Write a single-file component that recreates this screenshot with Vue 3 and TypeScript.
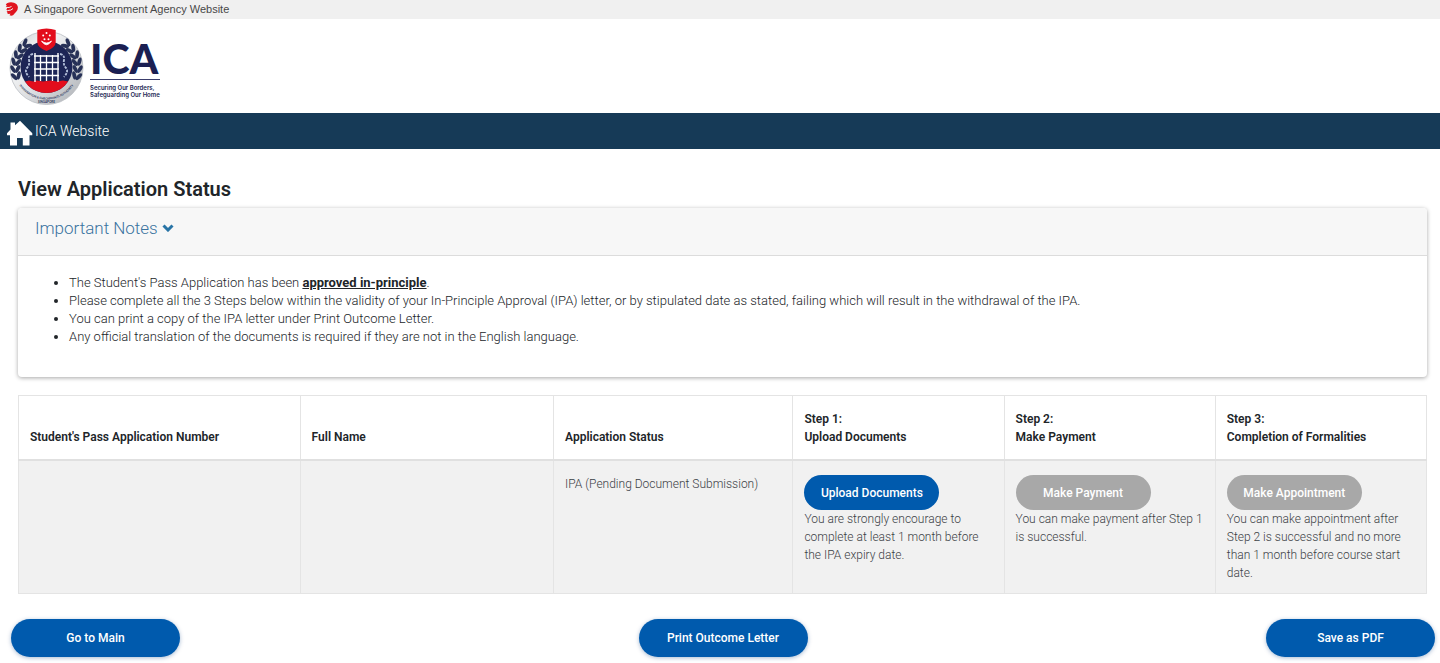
<script setup lang="ts">
interface Step {
  step: string
  title: string
  action: string
  enabled: boolean
  note: string
}

const navLabel = 'ICA Website'

const steps: Step[] = [
  {
    step: 'Step 1:',
    title: 'Upload Documents',
    action: 'Upload Documents',
    enabled: true,
    note: 'You are strongly encourage to complete at least 1 month before the IPA expiry date.',
  },
  {
    step: 'Step 2:',
    title: 'Make Payment',
    action: 'Make Payment',
    enabled: false,
    note: 'You can make payment after Step 1 is successful.',
  },
  {
    step: 'Step 3:',
    title: 'Completion of Formalities',
    action: 'Make Appointment',
    enabled: false,
    note: 'You can make appointment after Step 2 is successful and no more than 1 month before course start date.',
  },
]

const footerActions: string[] = ['Go to Main', 'Print Outcome Letter', 'Save as PDF']

// Leaves of the wreath: angle along the ring, in degrees from the top.
const leaves: number[] = [40, 53, 66, 79, 92, 105]
</script>

<template>
  <div class="page">
    <div class="gov-bar">
      <svg class="lion" viewBox="0 0 14 14" aria-hidden="true">
        <path d="M2 1.200Q5.500 -.3 9 .8q3.300 1 3.800 4Q13.200 8 11 10q-1.500 1.200-2 2.200-.7 1.400-2.700 1.600L4.500 13.200l1-1.500-2.800.4L2.400 10.600 1.600 9.800l1.200-1L1.300 7.500l.9-1.200L.8 5 1.800 3.800 .8 2.500z" fill="#e0141e" />
        <path d="M1 5.400Q4.500 6 6.500 4.500M2.500 8.600Q6.500 8.500 8 6.500" fill="none" stroke="#f0f0f0" stroke-width="1" />
      </svg>
      <span>A Singapore Government Agency Website</span>
    </div>

    <header class="brand">
      <svg class="crest" viewBox="0 0 76 78" role="img" aria-label="ICA crest">
        <defs>
          <linearGradient id="silver" x1="0" y1="0" x2="1" y2="1">
            <stop offset="0" stop-color="#c4c7cc" />
            <stop offset=".3" stop-color="#f4f5f6" />
            <stop offset=".6" stop-color="#d9dbde" />
            <stop offset="1" stop-color="#a9acb1" />
          </linearGradient>
          <clipPath id="disc"><circle cx="37.500" cy="39" r="26" /></clipPath>
          <path id="arc" d="M6 48 A32.800 32.800 0 0 0 69 48" />
        </defs>
        <circle cx="37.500" cy="40" r="36.500" fill="url(#silver)" stroke="#b9bcc1" stroke-width=".8" />
        <circle cx="37.500" cy="39" r="26" fill="#1d2556" />
        <g clip-path="url(#disc)">
          <path d="M8 54q8 0 12-1.500l4 1 4-1 6 1 8-1 6 1 6-1 5 1 10 1v20H8z" fill="#e30d1c" />
        </g>
        <g fill="#273157">
          <g v-for="a in leaves" :key="a">
            <g :transform="`rotate(${a} 37.500 40)`">
              <ellipse cx="37.500" cy="6.500" rx="4.200" ry="1.900" transform="rotate(28 37.500 6.500)" />
              <ellipse cx="37.500" cy="11.200" rx="4.200" ry="1.900" transform="rotate(-28 37.500 11.200)" />
            </g>
            <g :transform="`rotate(${-a} 37.500 40)`">
              <ellipse cx="37.500" cy="6.500" rx="4.200" ry="1.900" transform="rotate(-28 37.500 6.500)" />
              <ellipse cx="37.500" cy="11.200" rx="4.200" ry="1.900" transform="rotate(28 37.500 11.200)" />
            </g>
          </g>
        </g>
        <g stroke="#fff" fill="none">
          <path d="M26 25v29M49 25v29" stroke-width="1.400" />
          <path d="M31.500 27v26M37.500 27v26M43.500 27v26" stroke-width="1.300" />
          <path d="M25 28h25M25 34.500h25M25 41h25M25 47.500h25" stroke-width="1.300" />
          <path d="M24 26q-5 1-4 6t-2 8 2 9M51 26q5 1 4 6t2 8-2 9" stroke="#b4c0da" stroke-width="1.800" stroke-dasharray="2.500 1.200" />
        </g>
        <path d="M28.300 2q9.200-3 18.400 0v12q0 5.500-9.200 9-9.200-3.500-9.200-9z" fill="#e30d1c" />
        <path d="M32.500 13q5 7.500 10 0-5 4-10 0" fill="#fff" stroke="#fff" stroke-width=".8" />
        <g fill="#fff">
          <circle cx="37.500" cy="5" r="1" /><circle cx="34.200" cy="7.600" r="1" /><circle cx="40.800" cy="7.600" r="1" />
          <circle cx="35.500" cy="11.200" r="1" /><circle cx="39.500" cy="11.200" r="1" />
        </g>
        <text class="crest-text"><textPath href="#arc" startOffset="50%" text-anchor="middle">IMMIGRATION &amp; CHECKPOINTS AUTHORITY</textPath></text>
        <text class="crest-text" x="37.500" y="74.800" text-anchor="middle">SINGAPORE</text>
      </svg>
      <div class="wordmark">
        <div class="name">ICA</div>
        <div class="tagline">Securing Our Borders,<br />Safeguarding Our Home</div>
      </div>
    </header>

    <nav class="nav">
      <a href="#" class="home">
        <svg viewBox="0 0 26 26" aria-hidden="true">
          <path d="M13 .8 25.300 13.200v2H22.500v10.300H15.800V18H10v7.500H3V15.200H0v-2L3.500 9.500V2.500H8v2.800z" fill="#fff" />
        </svg>
        <span>{{ navLabel }}</span>
      </a>
    </nav>

    <main class="content">
      <h1>View Application Status</h1>

      <section class="card">
        <h2>
          <button type="button" class="toggle" aria-expanded="true">
            Important Notes
            <svg viewBox="0 0 12 8" aria-hidden="true"><path d="M1.500 1.500 6 6l4.500-4.500" /></svg>
          </button>
        </h2>
        <ul>
          <li>The Student's Pass Application has been <strong>approved in-principle</strong>.</li>
          <li>Please complete all the 3 Steps below within the validity of your In-Principle Approval (IPA) letter, or by stipulated date as stated, failing which will result in the withdrawal of the IPA.</li>
          <li>You can print a copy of the IPA letter under Print Outcome Letter.</li>
          <li>Any official translation of the documents is required if they are not in the English language.</li>
        </ul>
      </section>

      <table>
        <colgroup>
          <col class="c-number" /><col class="c-name" /><col class="c-status" />
          <col v-for="s in steps" :key="s.step" class="c-step" />
        </colgroup>
        <thead>
          <tr>
            <th scope="col">Student's Pass Application Number</th>
            <th scope="col">Full Name</th>
            <th scope="col">Application Status</th>
            <th v-for="s in steps" :key="s.step" scope="col">{{ s.step }}<br />{{ s.title }}</th>
          </tr>
        </thead>
        <tbody>
          <tr>
            <td></td>
            <td></td>
            <td>IPA (Pending Document Submission)</td>
            <td v-for="s in steps" :key="s.step">
              <button type="button" class="step-btn" :disabled="!s.enabled">{{ s.action }}</button>
              <div>{{ s.note }}</div>
            </td>
          </tr>
        </tbody>
      </table>
    </main>

    <footer class="actions">
      <button v-for="label in footerActions" :key="label" type="button">{{ label }}</button>
    </footer>
  </div>
</template>

<style>
body {
  background: #fff;
}
</style>

<style scoped>
.page {
  font-family: Roboto, "Liberation Sans", sans-serif;
  font-size: 13px;
  line-height: 18px;
  color: #212529;
}

.page *,
.page {
  box-sizing: border-box;
}

button {
  font-family: inherit;
  border: 0;
  cursor: pointer;
}

.gov-bar {
  display: flex;
  align-items: center;
  gap: 5px;
  height: 19px;
  padding: 0 5px 2px;
  background: #f0f0f0;
  color: #484848;
  font-family: "Liberation Sans", Arial, sans-serif;
  font-size: 11px;
}

.lion {
  width: 14px;
  height: 14px;
}

.brand {
  display: flex;
  align-items: flex-start;
  gap: 5px;
  height: 94px;
  padding: 9px 9px 0;
}

.crest {
  width: 76px;
  height: 78px;
}

.crest-text {
  font-family: Lato, sans-serif;
  font-size: 3px;
  font-weight: 700;
  fill: #273157;
}

.wordmark {
  padding-top: 11px;
  color: #1b1f52;
}

.name {
  border-bottom: 1px solid #3a3d6b;
  font-family: Lato, "Liberation Sans", sans-serif;
  font-size: 41px;
  font-weight: 900;
  line-height: 40px;
}

.tagline {
  padding-top: 4px;
  font-family: Inter, "Liberation Sans", sans-serif;
  font-size: 6px;
  font-weight: 600;
  line-height: 7px;
}

.nav {
  height: 36px;
  padding: 0 7px;
  background: #163a57;
}

.home {
  display: inline-flex;
  align-items: center;
  gap: 2px;
  height: 36px;
  color: #fff;
  font-size: 14px;
  font-weight: 300;
  text-decoration: none;
}

.home svg {
  width: 26px;
  height: 26px;
  margin-top: 3px;
}

.content {
  padding: 28px 13px 0 18px;
}

h1 {
  margin: 0 0 7px;
  font-size: 20px;
  font-weight: 600;
  line-height: 24px;
}

.card {
  margin-bottom: 18px;
  border-radius: 4px;
  background: #fff;
  box-shadow: 0 1px 4px rgba(0, 0, 0, 0.35);
}

h2 {
  height: 48px;
  margin: 0;
  padding: 9px 17px;
  border-bottom: 1px solid #dcdcdc;
  border-radius: 4px 4px 0 0;
  background: #f7f7f7;
  font-size: 17px;
  font-weight: 300;
  line-height: 22px;
}

.toggle {
  padding: 0;
  background: none;
  color: #3a739f;
  font-size: 17px;
  font-weight: 300;
  line-height: 22px;
}

.toggle svg {
  width: 12px;
  height: 8px;
  margin-bottom: 2px;
  fill: none;
  stroke: #2874a6;
  stroke-width: 3;
}

ul {
  margin: 0;
  padding: 18px 18px 31px 51px;
  font-weight: 350;
}

strong {
  font-weight: 700;
  text-decoration: underline;
}

table {
  width: 100%;
  border-collapse: collapse;
  table-layout: fixed;
  font-size: 12px;
}

.c-number {
  width: 20%;
}

.c-name {
  width: 18%;
}

.c-status {
  width: 17%;
}

.c-step {
  width: 15%;
}

th,
td {
  border: 1px solid #e4e4e4;
  text-align: left;
}

th {
  padding: 14px 10px 13px 11px;
  border-bottom: 2px solid #e0e0e0;
  font-weight: 600;
  vertical-align: bottom;
}

td {
  padding: 14px 8px 11px 11px;
  background: #f1f1f1;
  color: #3c4146;
  font-weight: 300;
  vertical-align: top;
}

.step-btn {
  display: block;
  width: 135px;
  height: 35px;
  padding: 0;
  border-radius: 18px;
  background: #005aad;
  color: #fff;
  font-size: 12px;
  font-weight: 500;
}

.step-btn:disabled {
  background: #a8a8a8;
  cursor: default;
}

.actions {
  display: flex;
  justify-content: space-between;
  padding: 25px 5px 6px 11px;
}

.actions button {
  width: 169px;
  height: 38px;
  border-radius: 19px;
  background: #005aad;
  box-shadow: 0 1px 4px rgba(0, 60, 130, 0.35);
  color: #fff;
  font-size: 12px;
  font-weight: 500;
}
</style>
